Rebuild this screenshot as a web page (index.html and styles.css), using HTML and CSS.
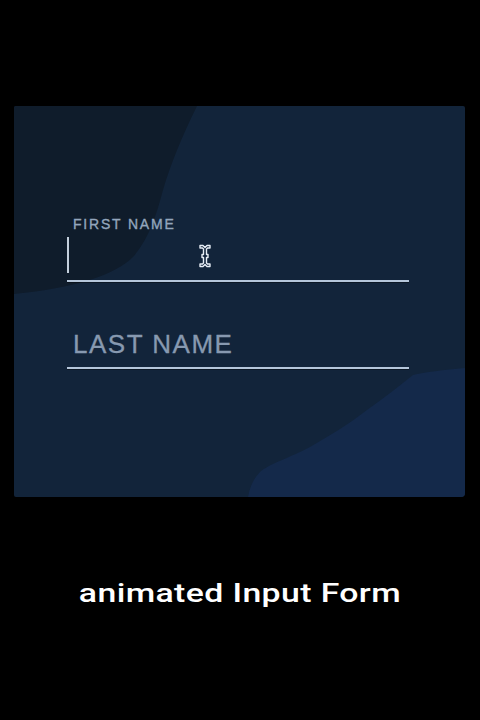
FILE: index.html
```html
<!DOCTYPE html>
<html>
<head>
<meta charset="utf-8">
<link rel="stylesheet" href="styles.css">
</head>
<body>
<div class="panel">
  <svg class="bg" width="451" height="391" viewBox="0 0 451 391">
    <path d="M0 0 L183 0 C168 30 156 60 149 84 C142 110 136 130 120 150 C100 170 60 182 0 188 Z" fill="#0f1c2b"/>
    <path d="M451 262 C430 264 410 266 399 269 C385 280 370 292 353 304 C335 318 315 330 296 341 C275 352 255 358 246 366 C240 372 236 380 234 391 L451 391 Z" fill="#14294a"/>
  </svg>
  <form class="form">
    <div class="field">
      <label class="label">FIRST NAME</label>
      <div class="input active">
        <span class="caret"></span>
        <svg class="ibeam" width="14" height="24" viewBox="0 0 14 24">
          <path d="M2 1.5 H5 L7 3.5 L9 1.5 H12 V4 H9.5 L8.5 5 V10.5 H10 V13.5 H8.5 V19 L9.5 20 H12 V22.5 H9 L7 20.5 L5 22.5 H2 V20 H4.5 L5.5 19 V13.5 H4 V10.5 H5.5 V5 L4.5 4 H2 Z" fill="#12233a" stroke="#e6edf5" stroke-width="1.4" stroke-linejoin="round"/>
        </svg>
      </div>
    </div>
    <div class="field field2">
      <div class="input">
        <span class="placeholder">LAST NAME</span>
      </div>
    </div>
  </form>
</div>
<div class="caption">
  <h1 class="title">animated Input Form</h1>
</div>
</body>
</html>
```

FILE: styles.css
```css
html, body {
  margin: 0;
  padding: 0;
  background: #000;
}
body {
  width: 480px;
  height: 720px;
  overflow: hidden;
  font-family: "Liberation Sans", Arial, sans-serif;
}
.panel {
  position: relative;
  margin: 106px 0 0 14px;
  width: 451px;
  height: 391px;
  background: #12243a;
  border-radius: 2px 2px 4px 2px;
  overflow: hidden;
  box-sizing: border-box;
  padding: 110px 56px 0 53px;
}
.bg {
  position: absolute;
  left: 0;
  top: 0;
  display: block;
}
.form {
  position: relative;
  display: flex;
  flex-direction: column;
  margin: 0;
}
.field {
  display: flex;
  flex-direction: column;
}
.label {
  font-size: 14px;
  line-height: 16px;
  letter-spacing: 1.8px;
  color: #93a6bd;
  -webkit-text-stroke: 0.35px #93a6bd;
  padding-left: 6px;
}
.input {
  position: relative;
  border-bottom: 2px solid #b5c6da;
  box-shadow: 0 1px 0 rgba(0,0,0,0.35);
}
.input.active {
  height: 43px;
  margin-top: 5px;
}
.caret {
  position: absolute;
  left: 0;
  top: 0;
  width: 2px;
  height: 36px;
  background: #c3cfdc;
}
.ibeam {
  position: absolute;
  left: 131px;
  top: 7px;
}
.field2 {
  margin-top: 47px;
}
.placeholder {
  display: block;
  font-size: 26px;
  line-height: 30px;
  letter-spacing: 1.5px;
  color: #8799b0;
  -webkit-text-stroke: 0.3px #8799b0;
  padding: 0 0 8px 6px;
}
.caption {
  display: flex;
  justify-content: center;
  margin-top: 78px;
}
.title {
  margin: 0;
  font-family: Roboto, "Liberation Sans", sans-serif;
  font-weight: 500;
  font-size: 26px;
  line-height: 36px;
  letter-spacing: 0.3px;
  color: #fff;
  white-space: nowrap;
  transform: scaleX(1.3);
}
```
